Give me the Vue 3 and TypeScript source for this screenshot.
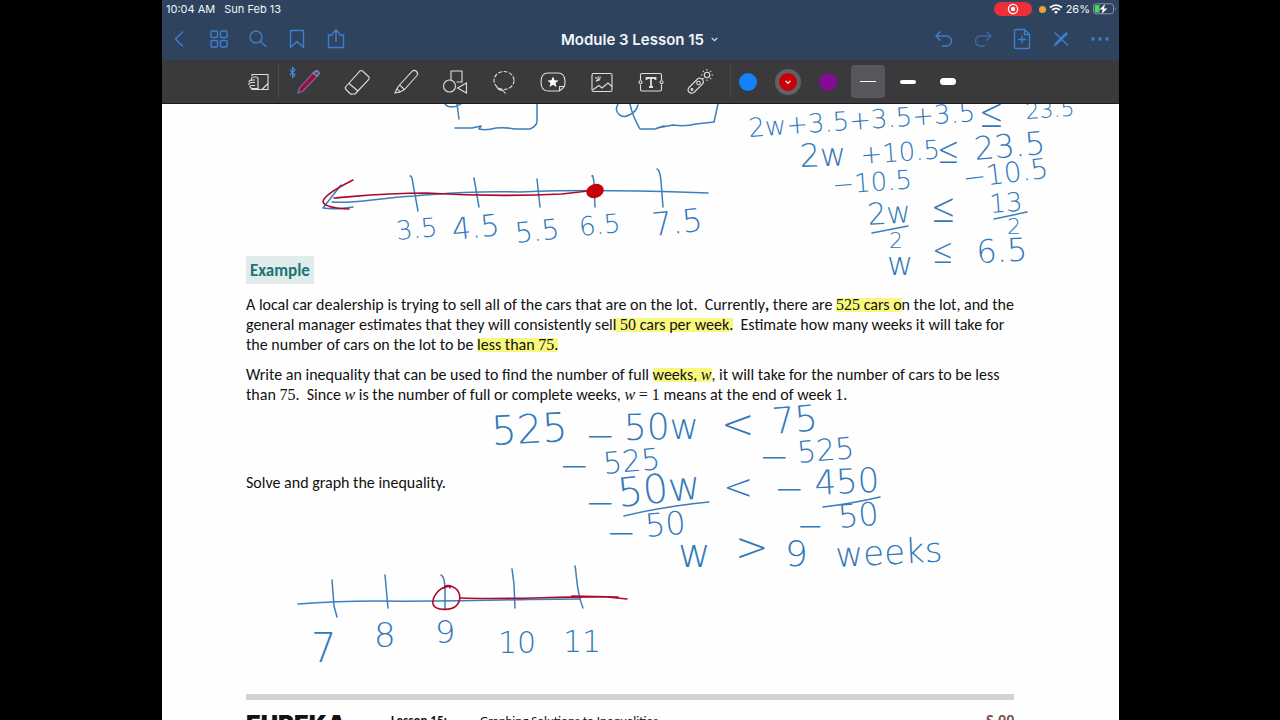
<script setup lang="ts">
interface Note {
  text: string
  x: number
  y: number
  size: number
  tilt?: number
}

interface Swatch {
  name: string
  tone: string
  selected?: boolean
}

const inkNotes: Note[] = [
  { text: '2w+3.5+3.5+3.5', x: 749, y: 137, size: 26, tilt: -4 },
  { text: '≤', x: 980, y: 127, size: 40 },
  { text: '23.5', x: 1026, y: 119, size: 22, tilt: -4 },
  { text: '2w', x: 800, y: 167, size: 32, tilt: -2 },
  { text: '+10.5', x: 861, y: 164, size: 26, tilt: -4 },
  { text: '≤', x: 938, y: 163, size: 36 },
  { text: '23.5', x: 975, y: 160, size: 32, tilt: -5 },
  { text: '−10.5', x: 833, y: 194, size: 26, tilt: -4 },
  { text: '−10.5', x: 964, y: 188, size: 28, tilt: -7 },
  { text: '2w', x: 868, y: 225, size: 30, tilt: -4 },
  { text: '≤', x: 932, y: 222, size: 40 },
  { text: '13', x: 990, y: 213, size: 26, tilt: -4 },
  { text: '2', x: 889, y: 248, size: 22 },
  { text: '2', x: 1007, y: 234, size: 22 },
  { text: 'w', x: 887, y: 275, size: 32 },
  { text: '≤', x: 933, y: 263, size: 34 },
  { text: '6.5', x: 977, y: 263, size: 32, tilt: -3 },
  { text: '3.5', x: 397, y: 240, size: 26, tilt: -6 },
  { text: '4.5', x: 453, y: 240, size: 30, tilt: -6 },
  { text: '5.5', x: 516, y: 243, size: 28, tilt: -6 },
  { text: '6.5', x: 580, y: 236, size: 26, tilt: -6 },
  { text: '7.5', x: 653, y: 236, size: 32, tilt: -6 },
  { text: '525', x: 492, y: 445, size: 40, tilt: -3 },
  { text: '−', x: 585, y: 448, size: 36 },
  { text: '50w', x: 624, y: 440, size: 36, tilt: -1 },
  { text: '<', x: 721, y: 438, size: 40 },
  { text: '75', x: 773, y: 434, size: 36, tilt: -5 },
  { text: '−', x: 559, y: 478, size: 36 },
  { text: '525', x: 604, y: 474, size: 30, tilt: -5 },
  { text: '−', x: 759, y: 469, size: 36 },
  { text: '525', x: 798, y: 463, size: 30, tilt: -5 },
  { text: '−', x: 585, y: 515, size: 36 },
  { text: '50w', x: 619, y: 507, size: 40, tilt: -6 },
  { text: '<', x: 723, y: 499, size: 36 },
  { text: '−', x: 774, y: 501, size: 36 },
  { text: '450', x: 815, y: 495, size: 34, tilt: -3 },
  { text: '−', x: 606, y: 545, size: 36 },
  { text: '50', x: 646, y: 537, size: 32, tilt: -5 },
  { text: '−', x: 797, y: 537, size: 32 },
  { text: '50', x: 839, y: 528, size: 32, tilt: -5 },
  { text: 'w', x: 678, y: 567, size: 40 },
  { text: '>', x: 735, y: 561, size: 40 },
  { text: '9', x: 785, y: 566, size: 36 },
  { text: 'weeks', x: 836, y: 567, size: 34, tilt: -3 },
  { text: '7', x: 311, y: 662, size: 40 },
  { text: '8', x: 374, y: 647, size: 34 },
  { text: '9', x: 435, y: 643, size: 32 },
  { text: '10', x: 498, y: 653, size: 30 },
  { text: '11', x: 563, y: 652, size: 30 },
]

const blueStrokes: string[] = [
  'M445 104 C448 108 455 108 461 104 M457 104 L459 119',
  'M455 128 H472 L481 126 L479 129 Q486 131 496 128 Q506 127 515 129 L530 129 Q537 126 537 121 V104',
  'M618 104 C613 113 622 119 629 115 C634 113 637 109 638 105',
  'M630 104 C632 114 636 122 640 129 L655 129 L664 126 L657 128 L673 125 Q685 127 696 124 L714 122 L718 104',
  'M332 202 C352 204 378 198 414 196 C450 193 476 191 520 192 C570 190 650 190 708 193',
  'M341 185 L323 208 Q334 210 353 207',
  'M410 176 Q412 175 413 184 L418 211',
  'M474 178 L479 207',
  'M537 179 L540 207',
  'M592 176 Q593 174 594 183 L595 207',
  'M657 169 Q660 170 661 181 L663 207',
  'M872 233 L908 226 M994 219 L1027 212',
  'M624 516 Q660 507 709 502 M823 507 Q850 504 880 497',
  'M298 604 Q336 601 376 601 C450 602 520 599 580 599',
  'M332 580 L334 606 L337 617',
  'M385 575 L388 608',
  'M441 575 Q445 577 445 590 V609',
  'M512 569 L514 584 L515 608',
  'M575 566 C577 575 576 591 583 608',
]

const redStrokes: string[] = [
  'M334 198 C360 196 382 193 426 193 C474 196 520 196 562 194 L588 191',
  'M353 180 Q323 195 323 202 Q325 208 349 209',
  'M445 587 C437 590 432 598 433 604 C435 611 452 611 457 605 C462 599 460 590 453 587 C449 585 445 585 444 588 Q450 585 450 588',
  'M460 598 C510 600 560 596 607 597 L627 599 M572 596 L618 597',
]

const swatches: Swatch[] = [
  { name: 'Blue ink', tone: 'blue' },
  { name: 'Red ink', tone: 'red', selected: true },
  { name: 'Purple ink', tone: 'purple' },
]

const widths = ['thin', 'medium', 'thick']
</script>

<template>
  <div class="screen">
    <div class="tablet">
      <div class="status">
        <span>10:04 AM</span>
        <span class="date">Sun Feb 13</span>
        <div class="status-right">
          <span class="record">
            <svg width="12" height="12" viewBox="0 0 12 12"><circle cx="6" cy="6" r="4.6" fill="none" stroke="#fff" stroke-width="1.2" /><circle cx="6" cy="6" r="2.2" fill="#fff" /></svg>
          </span>
          <i class="mic"></i>
          <svg width="14" height="10" viewBox="0 0 14 10" fill="none" stroke="#fff" stroke-width="1.8"><path d="M1 3.5 Q7 -1.3 13 3.5 M3.2 6 Q7 2.8 10.8 6" /><path d="M5 7.8 Q7 6.2 9 7.8 L7 10Z" fill="#fff" stroke="none" /></svg>
          <span>26%</span>
          <svg width="24" height="12" viewBox="0 0 24 12"><rect x=".5" y=".8" width="20" height="10" rx="2.6" fill="none" stroke="#8793a3" /><path d="M3 2 h3.5 v7.6 H3 Q1.8 9.6 1.8 8.4 V3.2 Q1.8 2 3 2Z" fill="#43d85b" /><path d="M12 1 L6.5 6.4 H9.8 L8.6 11 L14.4 5.4 H11Z" fill="#fff" /><path d="M22 4 Q23.5 6 22 8Z" fill="#8793a3" /></svg>
        </div>
      </div>

      <header class="nav">
        <div class="nav-group">
          <button aria-label="Back"><svg viewBox="0 0 24 24"><path d="M15 4.5 L7.500 12 L15 19.5" /></svg></button>
          <button aria-label="Pages"><svg viewBox="0 0 24 24"><rect x="4" y="4" width="6.5" height="6.5" rx="1" /><rect x="13.5" y="4" width="6.5" height="6.5" rx="1" /><rect x="4" y="13.5" width="6.5" height="6.5" rx="1" /><rect x="13.5" y="13.5" width="6.5" height="6.5" rx="1" /></svg></button>
          <button aria-label="Search"><svg viewBox="0 0 24 24"><circle cx="10" cy="10" r="6" /><path d="M14.5 14.5 L20.5 20" /></svg></button>
          <button aria-label="Bookmark"><svg viewBox="0 0 24 24"><path d="M5.5 3.5 H18.5 V20.5 L12 14.5 L5.5 20.5Z" /></svg></button>
          <button aria-label="Share"><svg viewBox="0 0 24 24"><path d="M9 8 H4.5 V20.5 H19.5 V8 H15 M12 15 V3 M8.3 6.5 L12 2.8 L15.7 6.5" /></svg></button>
        </div>
        <button class="title">Module 3 Lesson 15 <svg viewBox="0 0 8 8"><path d="M1.5 2.5 L4 5 L6.5 2.5" /></svg></button>
        <div class="nav-group right">
          <button aria-label="Undo"><svg viewBox="0 0 24 24"><path d="M8.5 4.5 L4 9 L8.5 13.5 M4 9 H14.5 A5 5 0 0 1 14.5 19 H10" /></svg></button>
          <button aria-label="Redo" class="dim"><svg viewBox="0 0 24 24"><path d="M15.5 4.5 L20 9 L15.5 13.5 M20 9 H9.5 A5 5 0 0 0 9.5 19 H14" /></svg></button>
          <button aria-label="Add page"><svg viewBox="0 0 24 24"><path d="M4.500 4 Q4.500 2.500 6 2.500 H14.500 L19.500 7.500 V20 Q19.500 21.500 18 21.500 H6 Q4.500 21.500 4.500 20Z M14.500 2.500 V7.500 H19.500 M12 8.500 V16.500 M8 12.500 H16" /></svg></button>
          <button aria-label="Read only"><svg viewBox="0 0 24 24"><path d="M5.500 5.500 L19 18.500" /><path d="M5 19 L6.800 15.600 L17.200 5.200 L18.800 6.800 L8.400 17.200Z" fill="#3c80cd" stroke-width=".6" /></svg></button>
          <button aria-label="More"><svg viewBox="0 0 24 24" class="dots"><circle cx="5" cy="12" r="1.800" /><circle cx="12" cy="12" r="1.800" /><circle cx="19" cy="12" r="1.800" /></svg></button>
        </div>
      </header>

      <div class="tools">
        <div class="zoom-tool">
          <button aria-label="Zoom window"><svg viewBox="0 0 28 28"><path d="M7 8 V6.500 H23 V21.500 H7 V20 M23 15.500 L17 21.500" /><path d="M7 20.500 H13 V11 Q13 9 11 9 H8 Q6.500 9 6.500 11 V13 M10 12 H6.500 Q4 12 4 14 M10 14.500 H5.500 Q3.500 15 4 17 M10 17.500 H6 Q4 18 6 20 L7 20.500" /></svg></button>
        </div>
        <button aria-label="Pen"><svg viewBox="0 0 28 28"><path d="M-4 2 L1 7 L-1.500 9.500 V-.5 L1 2 L-4 7" stroke="#3f8be0" /><path d="M4 25 L5.500 20 L20.500 3.500 Q23 1.800 25 4 Q25.800 5.500 24.500 7 L9 23Z" fill="#a30a35" stroke="#6378b5" /><path d="M19 5 L23 8.500 L25 5 L23 2.500Z" fill="#4d536a" stroke="#8192be" /></svg></button>
        <button aria-label="Eraser"><svg viewBox="0 0 28 28"><path d="M3 18.500 L17 3 Q18 2 19.500 3 L25.500 8.500 Q27 10 25.800 11.300 L12 26 M6 15.500 L15 23 M3 18.500 Q1.500 20 3 21.500 L7 25.500 Q8 26.500 9.500 26 L12 26 L15 23" /></svg></button>
        <button aria-label="Highlighter"><svg viewBox="0 0 28 28"><path d="M7.500 17 L20.500 3 Q22.500 1.500 24.500 3.500 Q26.500 5.500 25 7.500 L12.500 21.500 Z M7.500 17 L5 20.500 L8 24 L12.500 21.500 M5 20.500 L3 25 L8 24" /></svg></button>
        <button aria-label="Shapes"><svg viewBox="0 0 28 28"><path d="M10 12 V3 H21 V14 H15.500" /><circle cx="8.500" cy="18" r="6" /><path d="M25.500 15 V25 L16.500 20Z" /></svg></button>
        <button aria-label="Lasso"><svg viewBox="0 0 28 28"><ellipse cx="14" cy="12.500" rx="10" ry="9" stroke-dasharray="4 1.500" /><path d="M7 19 Q8 22 13 22.500 L15.500 25.500" /></svg></button>
        <button aria-label="Stickers"><svg viewBox="0 0 28 28"><path d="M20.500 23 H9 Q2 23 2 14 Q2 5 9 5 H19 Q26 5 26 14 Q26 18 24.500 19.500Z M20.500 23 V18.500 H25" /><path d="M14 8.500 L15.600 12.300 L19.500 12.600 L16.500 15 L17.500 19 L14 16.800 L10.500 19 L11.500 15 L8.500 12.600 L12.400 12.300Z" fill="#fff" stroke="none" /></svg></button>
        <button aria-label="Image"><svg viewBox="0 0 28 28"><rect x="4" y="5.500" width="20" height="18" rx="1.500" /><path d="M4.500 22 L11 17.500 L14 20 L20 15 L24 18.500 M12 8.500 Q13 12.500 8 13 Q11 11.500 10 8.500 M8 9 V11" /></svg></button>
        <button aria-label="Text box"><svg viewBox="0 0 28 28"><path d="M3.500 12 V7 Q3.500 5.500 5 5.500 H23 Q24.500 5.500 24.500 7 V12 M24.500 16.500 V21.500 Q24.500 23 23 23 H5 Q3.500 23 3.500 21.500 V16.500" /><circle cx="3.500" cy="14.200" r="1.500" /><circle cx="24.500" cy="14.200" r="1.500" /><path d="M9.500 12 V10 H18.500 V12 M14 10 V19 M12 19 H16" stroke-width="1.800" /></svg></button>
        <button aria-label="Laser pointer"><svg viewBox="0 0 28 28"><path d="M3 19.500 L12 10.500 Q14.500 9.500 16.500 11.500 Q18 13.500 17 15.500 L8 24.500 Q5 26 3 24 Q1 22 3 19.500Z" /><circle cx="12.500" cy="15" r="1.800" /><circle cx="6" cy="21.500" r=".9" /><circle cx="21" cy="7" r="2.700" /><path d="M21 1 V2.500 M21 11.500 V13 M15 7 H16.500 M25.500 7 H27 M16.800 2.800 L17.800 3.800 M24.200 10.200 L25.200 11.200 M24.200 3.800 L25.200 2.800 M16.800 11.200 L17.800 10.200" /></svg></button>
        <div class="ink-options">
          <button v-for="s in swatches" :key="s.name" :aria-label="s.name" :aria-pressed="!!s.selected">
            <span class="swatch" :class="[s.tone, { selected: s.selected }]">
              <svg v-if="s.selected" viewBox="0 0 8 8"><path d="M2 3 L4 5 L6 3" /></svg>
            </span>
          </button>
          <button v-for="w in widths" :key="w" :aria-label="w + ' stroke'" :class="{ active: w === 'thin' }"><i class="stroke" :class="w"></i></button>
        </div>
      </div>

      <main class="sheet">
        <article class="doc">
          <h1>Example</h1>
          <p>A local car dealership is trying to sell all of the cars that are on the lot.&nbsp; Currently<b>,</b> there are <mark><span class="num">525</span> cars o</mark>n the lot, and the<br>general manager estimates that they will consistently sel<mark>l <span class="num">50</span> cars per week.</mark>&nbsp; Estimate how many weeks it will take for<br>the number of cars on the lot to be <mark>less than <span class="num">75</span>.</mark></p>
          <p>Write an inequality that can be used to find the number of full <mark>weeks, <i class="num">w</i></mark>, it will take for the number of cars to be less<br>than <span class="num">75</span>.&nbsp; Since <i class="num">w</i> is the number of full or complete weeks, <i class="num">w</i> <span class="num">= 1</span> means at the end of week <span class="num">1</span>.</p>
          <p class="task">Solve and graph the inequality.</p>
          <footer>
            <strong class="brand">EUREKA</strong>
            <b class="lesson">Lesson 15:</b>
            <span>Graphing Solutions to Inequalities</span>
            <b class="page-no">S.99</b>
          </footer>
        </article>
        <svg class="ink" viewBox="162 104 957 616" preserveAspectRatio="xMinYMin meet">
          <path v-for="(d, i) in blueStrokes" :key="'b' + i" :d="d" class="blue-line" />
          <text v-for="(n, i) in inkNotes" :key="'n' + i" :class="{ relation: n.text === '≤' }" :x="n.x" :y="n.y" :font-size="n.size" :transform="`rotate(${n.tilt ?? 0} ${n.x} ${n.y})`">{{ n.text }}</text>
          <path v-for="(d, i) in redStrokes" :key="'r' + i" :d="d" class="red-line" />
          <ellipse cx="595" cy="191" rx="9" ry="7" fill="#c40008" transform="rotate(-20 595 191)" />
        </svg>
      </main>
    </div>
  </div>
</template>

<style>
body {
  background: #000;
}
</style>

<style scoped>
.screen {
  height: 100vh;
  padding: 0 161px 0 162px;
  overflow: hidden;
  background: #000;
  box-sizing: border-box;
}
.tablet {
  height: 100%;
  display: flex;
  flex-direction: column;
  font-family: Inter, "Liberation Sans", sans-serif;
  background: #2f435f;
}
button {
  border: 0;
  padding: 0;
  margin: 0;
  background: none;
  display: flex;
  align-items: center;
  justify-content: center;
  color: inherit;
  font: inherit;
}
.status {
  display: flex;
  align-items: center;
  height: 18px;
  padding: 0 2px 0 4px;
  color: #f2f5f9;
  font-size: 11px;
  font-weight: 400;
}
.date {
  margin-left: 9px;
}
.status-right {
  margin-left: auto;
  display: flex;
  align-items: center;
  gap: 3px;
}
.record {
  width: 38px;
  height: 14px;
  border-radius: 7px;
  background: #ee2f38;
  display: flex;
  align-items: center;
  justify-content: center;
  margin-right: 4px;
}
.mic {
  width: 7px;
  height: 7px;
  border-radius: 50%;
  background: #e8a335;
}
.nav {
  height: 42px;
  flex: none;
  display: flex;
  align-items: center;
  justify-content: space-between;
  padding: 0 3px 0 2px;
}
.nav-group {
  display: flex;
  gap: 8px;
}
.nav-group button {
  width: 31px;
  height: 32px;
}
.nav-group svg {
  width: 24px;
  height: 24px;
  fill: none;
  stroke: #3c80cd;
  stroke-width: 1.4;
}
.nav-group .dots {
  fill: #3c80cd;
  stroke: none;
}
.nav-group .dim {
  opacity: 0.65;
}
.title {
  color: #f2f6fb;
  font-size: 15px;
  font-weight: 600;
  gap: 6px;
}
.title svg {
  width: 9px;
  height: 9px;
  fill: none;
  stroke: #e5edf5;
}
.tools {
  flex: none;
  height: 44px;
  box-sizing: border-box;
  display: flex;
  align-items: center;
  gap: 16px;
  padding-left: 80px;
  background: #3a3a3c;
  border-bottom: 1px solid #1c1c1e;
}
.tools button {
  width: 33px;
  height: 33px;
  flex: none;
}
.tools svg {
  width: 28px;
  height: 28px;
  fill: none;
  stroke: #dededf;
  stroke-width: 1.1;
  overflow: visible;
}
.zoom-tool {
  padding-right: 3px;
  margin-right: -4px;
  border-right: 1px solid #4b4b4e;
}
.ink-options {
  display: flex;
  gap: 6px;
  border-left: 1px solid #4b4b4e;
  margin-left: -2px;
}
.ink-options button {
  width: 34px;
}
.ink-options .active {
  background: #58585c;
  border-radius: 4px;
}
.swatch {
  width: 18px;
  height: 18px;
  border-radius: 50%;
  display: flex;
  align-items: center;
  justify-content: center;
}
.swatch.selected {
  border: 4px solid #626265;
}
.tools .swatch svg {
  width: 10px;
  height: 10px;
}
.blue {
  background: #1482fa;
}
.red {
  background: #c90009;
}
.purple {
  background: #820d92;
}
.stroke {
  width: 16px;
  border-radius: 4px;
  background: #fff;
}
.thin {
  height: 1px;
}
.medium {
  height: 4px;
}
.thick {
  height: 7px;
}
.sheet {
  flex: 1;
  min-height: 0;
  position: relative;
  overflow: hidden;
  background: #fefefe;
}
.doc {
  padding: 152px 105px 0 84px;
  color: #111;
  font-family: Carlito, Lato, "Open Sans", sans-serif;
  font-size: 16px;
  line-height: 20px;
  white-space: nowrap;
}
h1 {
  width: fit-content;
  margin: 0 0 11px;
  padding: 1px 4px 0;
  background: #dfece9;
  color: #1d7376;
  font-size: 17px;
  font-weight: 700;
  line-height: 27px;
}
p {
  margin: 0 0 10px;
}
.task {
  padding-top: 58px;
}
mark {
  color: inherit;
  border-radius: 5px;
  background: linear-gradient(#f8f87e, #f8f87e) 0 50% / 100% 14px no-repeat;
}
.num {
  font-family: "Liberation Serif", serif;
  font-size: 16px;
  line-height: 16px;
}
footer {
  display: flex;
  align-items: flex-start;
  margin-top: 201px;
  padding-top: 11px;
  border-top: 6px solid #d3d3d3;
  font-size: 13px;
}
.brand {
  width: 145px;
  padding-top: 4px;
  font-family: Inter, sans-serif;
  font-size: 24px;
  font-weight: 900;
}
.lesson {
  width: 89px;
}
.page-no {
  margin-left: auto;
  color: #795049;
  font-size: 16px;
}
.ink {
  position: absolute;
  inset: 0;
  width: 100%;
  height: auto;
  font-family: "DejaVu Sans", sans-serif;
  font-weight: 200;
  fill: #3479b9;
}
.relation {
  font-family: "Open Sans", "Noto Sans", sans-serif;
  font-weight: 300;
}
.blue-line {
  fill: none;
  stroke: #3c7fbc;
  stroke-width: 1.5;
  stroke-linecap: round;
  stroke-linejoin: round;
}
.red-line {
  fill: none;
  stroke: #ab0a2b;
  stroke-width: 1.6;
  stroke-linecap: round;
  stroke-linejoin: round;
}
</style>
